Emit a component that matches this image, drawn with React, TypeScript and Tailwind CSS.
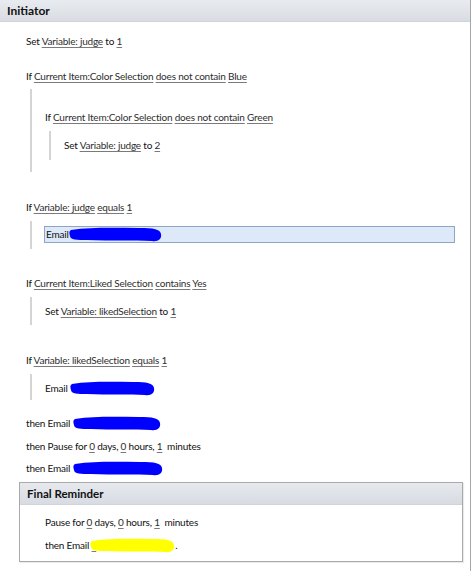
import type { ReactNode } from "react";

const L = ({ children }: { children: ReactNode }) => (
  <span className="underline decoration-[#7a7a7a] underline-offset-2 text-[#2e2e2e]">{children}</span>
);

const Row = ({ children, className = "" }: { children: ReactNode; className?: string }) => (
  <div className={`h-4 leading-4 whitespace-pre ${className}`}>{children}</div>
);

const Block = ({ children, className = "" }: { children: ReactNode; className?: string }) => (
  <div className={`ml-[4px] border-l-2 border-[#d4d4d4] pl-[13px] ${className}`}>{children}</div>
);

// blotted-out address (drawn over the original text)
const Scribble = ({ w, color = "#0000ff" }: { w: number; color?: string }) => (
  <svg width={w} height={17} viewBox={`0 0 ${w} 17`} className="inline-block align-middle -mt-[2px]">
    <path
      d={`M2 4 C ${w * 0.25} 1, ${w * 0.5} 2, ${w * 0.75} 2 C ${w - 8} 2, ${w - 2} 3, ${w - 1} 8 C ${w} 13, ${w - 4} 16, ${w - 10} 15 C ${w * 0.7} 14, ${w * 0.45} 15, ${w * 0.2} 14 C 8 14, 1 14, 1 10 C 0 7, 0 5, 2 4 Z`}
      fill={color}
    />
  </svg>
);

export default function App() {
  return (
    <div className="w-[474px] h-[571px] bg-white overflow-hidden text-[10px] tracking-[-0.2px] text-[#111111]" style={{ fontFamily: 'Lato, "Open Sans", sans-serif' }}>
      <div className="w-[471px] h-full border-r border-[#a6a6a6]">
        <div className="h-[22px] flex items-center pl-[7px] font-bold text-[12px] tracking-normal bg-gradient-to-b from-[#e8ebef] to-[#d9dde3] border-b border-[#cfd4db]">
          Initiator
        </div>
        <div className="pl-[26px]">
          <Row className="mt-[11px]">
            Set <L>Variable: judge</L> to <L>1</L>
          </Row>
          <Row className="mt-[19px]">
            If <L>Current Item:Color Selection</L> <L>does not contain</L> <L>Blue</L>
          </Row>
          <Block className="mt-[5px] pt-[20px] pb-[12px]">
            <Row>
              If <L>Current Item:Color Selection</L> <L>does not contain</L> <L>Green</L>
            </Row>
            <Block className="mt-[6px] pt-[6px] pb-[7px]">
              <Row>
                Set <L>Variable: judge</L> to <L>2</L>
              </Row>
            </Block>
          </Block>
          <Row className="mt-[27px]">
            If <L>Variable: judge</L> <L>equals</L> <L>1</L>
          </Row>
          <Block className="mt-[6px] pt-[5px] pb-[6px]">
            <div className="-ml-px w-[411px] h-[17px] bg-[#dde9f8] border border-[#8ea6c6] leading-[15px] pl-[1px] whitespace-pre">
              Email<Scribble w={93} />
            </div>
          </Block>
          <Row className="mt-[26px]">
            If <L>Current Item:Liked Selection</L> <L>contains</L> <L>Yes</L>
          </Row>
          <Block className="mt-[6px] pt-[6px] pb-[6px]">
            <Row>
              Set <L>Variable: likedSelection</L> to <L>1</L>
            </Row>
          </Block>
          <Row className="mt-[27px]">
            If <L>Variable: likedSelection</L> <L>equals</L> <L>1</L>
          </Row>
          <Block className="mt-[6px] pt-[6px] pb-[4px]">
            <Row>
              Email <Scribble w={85} />
            </Row>
          </Block>
          <Row className="mt-[15px]">
            then Email <Scribble w={88} />
          </Row>
          <Row className="mt-[7px]">
            then Pause for <L>0</L> days, <L>0</L> hours, <L>1</L>  minutes
          </Row>
          <Row className="mt-[6px]">
            then Email <Scribble w={90} />
          </Row>
          <div className="-ml-[7px] mt-[6px] w-[444px] border border-[#a9a9a9] shadow-[1px_1px_1px_rgba(0,0,0,0.08)]">
            <div className="h-[22px] flex items-center pl-[7px] font-bold text-[11.5px] tracking-normal bg-gradient-to-b from-[#e6e9ee] to-[#d8dce2] border-b border-[#cfd4db]">
              Final Reminder
            </div>
            <div className="pl-[25px] pt-[9px] pb-[8px]">
              <Row>
                Pause for <L>0</L> days, <L>0</L> hours, <L>1</L>  minutes
              </Row>
              <Row className="mt-[7px]">
                then Email <L>  </L>
                <span className="-ml-[6px]"><Scribble w={85} color="#ffff00" /></span>.
              </Row>
            </div>
          </div>
        </div>
      </div>
    </div>
  );
}
